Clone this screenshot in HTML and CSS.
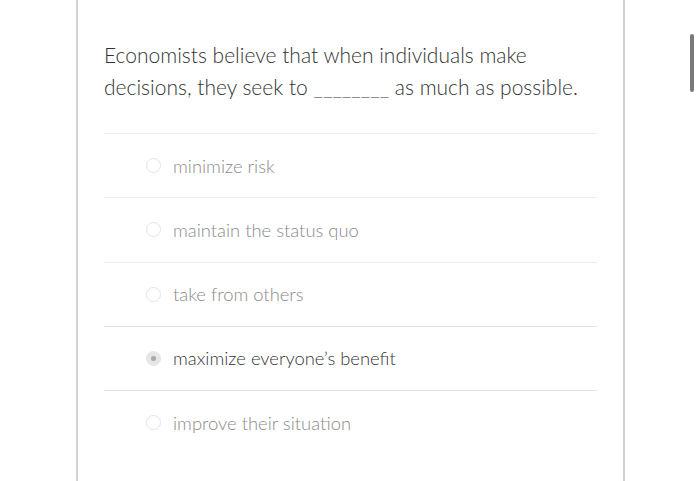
FILE: index.html
```html
<!DOCTYPE html>
<html>
<head>
<meta charset="utf-8">
<link rel="stylesheet" href="styles.css">
</head>
<body>
<div class="page">
  <div class="card">
    <p class="question">Economists believe that when individuals make decisions, they seek to ________ as much as possible.</p>
    <ul class="options">
      <li class="option"><span class="radio"></span><span class="label">minimize risk</span></li>
      <li class="option"><span class="radio"></span><span class="label">maintain the status quo</span></li>
      <li class="option"><span class="radio"></span><span class="label">take from others</span></li>
      <li class="option selected"><span class="radio"></span><span class="label">maximize everyone’s benefit</span></li>
      <li class="option"><span class="radio"></span><span class="label">improve their situation</span></li>
    </ul>
  </div>
  <div class="scrollbar"></div>
</div>
</body>
</html>
```
FILE: styles.css
```css
html, body {
  margin: 0;
  padding: 0;
  background: #fff;
  height: 100%;
  overflow: hidden;
}
.page {
  position: relative;
  height: 100%;
  display: flex;
  padding-left: 76px;
}
.card {
  box-sizing: border-box;
  width: 549px;
  border-left: 2px solid #d2d2d2;
  border-right: 2px solid #d2d2d2;
  padding: 39px 26px 0 26px;
  font-family: Lato, "Open Sans", sans-serif;
  font-weight: 300;
  flex: none;
}
.question {
  margin: 0;
  font-size: 21px;
  line-height: 32px;
  color: #333;
  padding-right: 10px;
  padding-bottom: 30px;
  border-bottom: 1px solid #ececec;
}
.options {
  list-style: none;
  margin: 0;
  padding: 0;
}
.option {
  height: 63.25px;
  border-bottom: 1px solid #ececec;
  display: flex;
  align-items: center;
  padding-left: 42px;
  gap: 12px;
  font-size: 18.4px;
  color: #8a8a8a;
}
.option:last-child {
  border-bottom: none;
}
.option.selected {
  color: #333;
}
.option:nth-child(3), .option.selected {
  border-bottom-color: #e2e2e2;
}
.radio {
  width: 15px;
  height: 15px;
  border: 1.5px solid #e4e4e4;
  border-radius: 50%;
  box-sizing: border-box;
  display: flex;
  align-items: center;
  justify-content: center;
  flex: none;
}
.selected .radio {
  background: #e6e6e6;
  border-color: #e6e6e6;
}
.selected .radio::after {
  content: "";
  width: 5px;
  height: 5px;
  border-radius: 50%;
  background: #a9a9a9;
}
.scrollbar {
  position: absolute;
  left: 690px;
  top: 34px;
  width: 4px;
  height: 58px;
  border-radius: 2px;
  background: #7a7a7a;
}
```
